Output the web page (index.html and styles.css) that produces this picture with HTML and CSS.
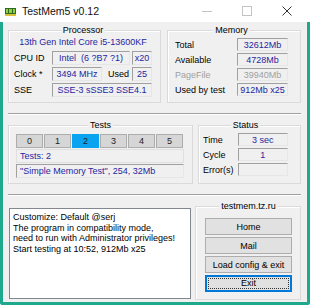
FILE: index.html
```html
<!DOCTYPE html>
<html lang="en">
<head>
    <meta charset="UTF-8">
    <title>TestMem5 v0.12</title>
    <link rel="stylesheet" href="styles.css">
</head>
<body>
<div class="window">
    <div class="titlebar">
        <svg class="app-icon" width="11" height="8" viewBox="0 0 11 8">
            <rect x="0" y="0" width="11" height="8" fill="#2f6a1e"/>
            <rect x="1" y="1" width="2" height="4" fill="#8fd04a"/>
            <rect x="4" y="1" width="3" height="4" fill="#8fd04a"/>
            <rect x="8" y="1" width="2" height="4" fill="#8fd04a"/>
            <rect x="0" y="6" width="11" height="2" fill="#d8c23a"/>
        </svg>
        <span class="title-text">TestMem5 v0.12</span>
        <div class="caption-buttons">
            <svg width="10" height="10" viewBox="0 0 10 10"><line x1="0" y1="5.5" x2="10" y2="5.5" stroke="#c4c4c4" stroke-width="1"/></svg>
            <svg width="10" height="10" viewBox="0 0 10 10"><rect x="0.5" y="0.5" width="9" height="9" fill="none" stroke="#c4c4c4" stroke-width="1"/></svg>
            <svg width="10" height="10" viewBox="0 0 10 10"><path d="M0.5 0.5 L9.5 9.5 M9.5 0.5 L0.5 9.5" stroke="#333" stroke-width="1"/></svg>
        </div>
    </div>

    <div class="client">
        <div class="top-row">
            <div class="group processor">
                <div class="group-title">Processor</div>
                <div class="cpu-name">13th Gen Intel Core i5-13600KF</div>
                <div class="prow">
                    <span class="plabel">CPU ID</span>
                    <span class="field w78">Intel &nbsp;(6 ?B7 ?1)</span>
                    <span class="field w20 ml2">x20</span>
                </div>
                <div class="prow">
                    <span class="plabel">Clock *</span>
                    <span class="field w50">3494 MHz</span>
                    <span class="used-label">Used</span>
                    <span class="field w20">25</span>
                </div>
                <div class="prow">
                    <span class="plabel">SSE</span>
                    <span class="field w100">SSE-3 sSSE3 SSE4.1</span>
                </div>
            </div>

            <div class="group memory">
                <div class="group-title">Memory</div>
                <div class="mrow">
                    <span class="mlabel">Total</span>
                    <span class="field w51">32612Mb</span>
                </div>
                <div class="mrow">
                    <span class="mlabel">Available</span>
                    <span class="field w51">4728Mb</span>
                </div>
                <div class="mrow disabled">
                    <span class="mlabel">PageFile</span>
                    <span class="field w51">39940Mb</span>
                </div>
                <div class="mrow">
                    <span class="mlabel">Used by test</span>
                    <span class="field w51">912Mb x25</span>
                </div>
            </div>
        </div>

        <div class="separator"></div>

        <div class="mid-row">
            <div class="group tests">
                <div class="group-title">Tests</div>
                <div class="tabs">
                    <span class="tab">0</span>
                    <span class="tab">1</span>
                    <span class="tab active">2</span>
                    <span class="tab">3</span>
                    <span class="tab">4</span>
                    <span class="tab">5</span>
                </div>
                <div class="info-box flat">Tests: 2</div>
                <div class="info-box">"Simple Memory Test", 254, 32Mb</div>
            </div>

            <div class="group status">
                <div class="group-title">Status</div>
                <div class="srow">
                    <span class="slabel">Time</span>
                    <span class="field w51">3 sec</span>
                </div>
                <div class="srow">
                    <span class="slabel">Cycle</span>
                    <span class="field w51">1</span>
                </div>
                <div class="srow">
                    <span class="slabel">Error(s)</span>
                    <span class="field w51"></span>
                </div>
            </div>
        </div>

        <div class="separator"></div>

        <div class="bottom-row">
            <div class="log">
                Customize: Default @serj<br>
                The program in compatibility mode,<br>
                need to run with Administrator privileges!<br>
                Start testing at 10:52, 912Mb x25
            </div>

            <div class="group links">
                <div class="group-title">testmem.tz.ru</div>
                <div class="buttons">
                    <button class="btn">Home</button>
                    <button class="btn">Mail</button>
                    <button class="btn">Load config &amp; exit</button>
                    <button class="btn focused"><span>Exit</span></button>
                </div>
            </div>
        </div>
    </div>
</div>
</body>
</html>
```

FILE: styles.css
```css
body {
    margin: 0;
    padding: 0;
    background-color: #ffffff;
    font-family: "Liberation Sans", Arial, sans-serif;
    font-size: 9px;
    color: #000000;
}

.window {
    width: 310px;
    height: 308px;
    background-color: #ffffff;
}

.titlebar {
    height: 22px;
    display: flex;
    align-items: center;
    background-color: #ffffff;
}

.app-icon {
    margin-left: 5px;
    margin-top: 1px;
}

.title-text {
    margin-left: 6px;
    font-size: 10.5px;
    color: #111;
}

.caption-buttons {
    margin-left: auto;
    display: flex;
    gap: 30px;
    margin-right: 18px;
}

.client {
    height: 283px;
    box-sizing: border-box;
    background-color: #f0f0f0;
    border: 3px solid #1ea88c;
    border-top: none;
    border-radius: 0 0 3px 3px;
    padding: 8px 6px 0 5px;
}

.group {
    box-sizing: border-box;
    border: 1px solid #dadada;
    box-shadow: inset 1px 1px 0 #ffffff;
}

.group-title {
    display: table;
    margin: -6px auto 0;
    padding: 0 2px;
    line-height: 11px;
    background-color: #f0f0f0;
    color: #000;
}

.top-row {
    display: flex;
    gap: 6px;
}

.processor {
    width: 153px;
    height: 73px;
    padding: 0 8px 0 5px;
}

.memory {
    width: 134px;
    height: 73px;
    padding: 0 12px 0 7px;
}

.cpu-name {
    text-align: center;
    color: #1f1fa0;
    line-height: 11px;
    margin: 1px 0 3px;
    white-space: nowrap;
}

.prow {
    display: flex;
    height: 14px;
    margin-top: 2px;
    align-items: center;
}

.plabel {
    width: 38px;
}

.used-label {
    width: 30px;
    padding-left: 6px;
    box-sizing: border-box;
}

.field {
    box-sizing: border-box;
    height: 100%;
    display: flex;
    align-items: center;
    justify-content: center;
    border: 1px solid;
    border-color: #a0a0a0 #e6e6e6 #e6e6e6 #a0a0a0;
    color: #1f1fa0;
    white-space: nowrap;
}

.w20 { width: 20px; }
.w50 { width: 50px; }
.w51 { width: 51px; }
.w78 { width: 78px; }
.w100 { width: 100px; }
.ml2 { margin-left: 2px; }

.mrow {
    display: flex;
    height: 13px;
    margin-top: 2px;
    align-items: center;
}

.mlabel {
    width: 62px;
}

.disabled .mlabel,
.disabled .field {
    color: #a0a0a0;
}

.separator {
    height: 0;
    margin: 10px 0 10px;
    border-top: 1px solid #a0a0a0;
    border-bottom: 1px solid #ffffff;
}

.mid-row {
    display: flex;
    gap: 5px;
}

.tests {
    width: 185px;
    height: 59px;
    padding: 0 7px;
}

.status {
    width: 103px;
    height: 59px;
    padding: 0 12px 0 4px;
}

.tabs {
    display: flex;
    gap: 1px;
    margin-top: 3px;
}

.tab {
    box-sizing: border-box;
    width: 27px;
    height: 14px;
    display: flex;
    align-items: center;
    justify-content: center;
    background-color: #d6d6d6;
    border: 1px solid #adadad;
    color: #222;
}

.tab.active {
    background-color: #0aa3ef;
    border-color: #0aa3ef;
}

.info-box {
    box-sizing: border-box;
    width: 168px;
    height: 14px;
    margin-top: 1px;
    padding-left: 3px;
    line-height: 12px;
    border: 1px solid;
    border-color: #a0a0a0 #e6e6e6 #e6e6e6 #a0a0a0;
    color: #1f1fa0;
    white-space: nowrap;
}

.info-box.flat {
    border-color: #e0e0e0;
}

.srow {
    display: flex;
    height: 13px;
    margin-top: 2px;
    align-items: center;
}

.slabel {
    width: 35px;
}

.bottom-row {
    display: flex;
    gap: 4px;
    padding-left: 1px;
}

.log {
    box-sizing: border-box;
    width: 182px;
    height: 91px;
    margin-top: 2px;
    padding: 3px 3px;
    background-color: #ffffff;
    border: 1px solid #828790;
    line-height: 10.7px;
    white-space: nowrap;
    overflow: hidden;
}

.links {
    width: 106px;
    height: 94px;
    padding: 0 8px 0 9px;
}

.buttons {
    display: flex;
    flex-direction: column;
    gap: 2px;
    margin-top: 6px;
}

.btn {
    box-sizing: border-box;
    width: 87px;
    height: 17px;
    padding: 0;
    font-family: inherit;
    font-size: 9px;
    color: #000;
    background-color: #e1e1e1;
    border: 1px solid #adadad;
}

.btn.focused {
    border: 2px solid #0078d7;
    padding: 1px;
}

.btn.focused span {
    display: block;
    height: 100%;
    box-sizing: border-box;
    border: 1px dotted #333;
    line-height: 9px;
}
```
